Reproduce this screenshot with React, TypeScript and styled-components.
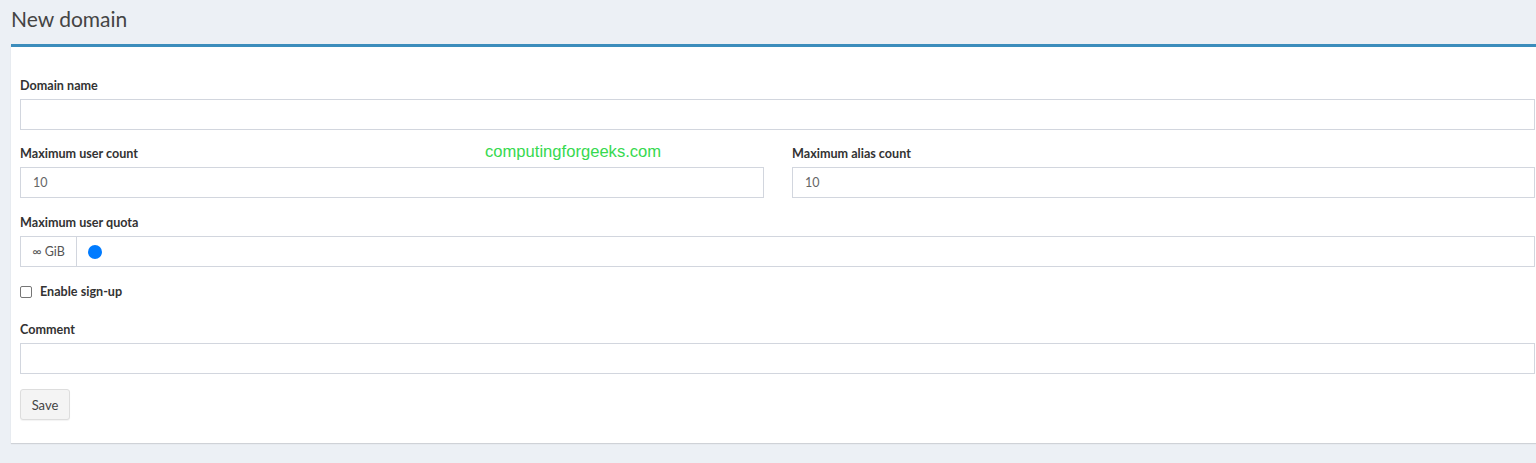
import React from "react";
import styled, { createGlobalStyle } from "styled-components";

const Global = createGlobalStyle`
  html, body { margin: 0; padding: 0; background: #ecf0f5; }
  body { font-family: "Source Sans Pro", Lato, "Noto Sans", sans-serif; color: #333; overflow: hidden; }
  * { box-sizing: border-box; }
`;

const Page = styled.div`
  position: relative;
  width: 1536px;
  height: 463px;
  padding-left: 11px;
`;

const Title = styled.h1`
  margin: 0;
  height: 44px;
  padding-top: 7px;
  font-size: 21px;
  line-height: 24px;
  font-weight: 400;
  color: #444;
`;

const Card = styled.div`
  background: #fff;
  border-top: 3px solid #3c8dbc;
  box-shadow: 0 1px 1px rgba(0, 0, 0, 0.12);
  padding: 30px 1px 23px 9px;
`;

const Group = styled.div<{ $gap?: number }>`
  margin-bottom: ${(p) => p.$gap ?? 15}px;
`;

const Row = styled.div`
  display: grid;
  grid-template-columns: 744px 1fr;
  column-gap: 28px;
`;

const Label = styled.label`
  display: block;
  font-size: 12.6px;
  font-weight: 700;
  line-height: 17px;
  margin-bottom: 5px;
  color: #333;
`;

const Input = styled.input`
  display: block;
  width: 100%;
  height: 31px;
  border: 1px solid #d2d6de;
  border-radius: 0;
  padding: 0 12px;
  font-family: inherit;
  font-size: 12.5px;
  color: #666;
  background: #fff;
  outline: none;
`;

const InputGroup = styled.div`
  display: flex;
  height: 31px;
  border: 1px solid #d2d6de;
`;

const Addon = styled.span`
  width: 56px;
  display: flex;
  align-items: center;
  justify-content: center;
  font-size: 12.5px;
  color: #555;
  border-right: 1px solid #d2d6de;
`;

const SliderArea = styled.div`
  flex: 1;
  display: flex;
  align-items: center;
  padding-left: 11px;
`;

const Thumb = styled.span`
  width: 14px;
  height: 14px;
  border-radius: 50%;
  background: #007bff;
`;

const CheckRow = styled.label`
  display: flex;
  align-items: center;
  height: 19px;
  margin-bottom: 20px;
  font-size: 12.6px;
  font-weight: 700;
  color: #333;
`;

const Box = styled.span`
  width: 12px;
  height: 12px;
  border: 1px solid #767676;
  border-radius: 2px;
  margin: 0 8px 0 0;
  background: #fff;
`;

const Button = styled.button`
  width: 50px;
  height: 31px;
  background: #f4f4f4;
  border: 1px solid #ddd;
  border-radius: 3px;
  font-family: inherit;
  font-size: 13px;
  color: #444;
  box-shadow: 0 1px 1px rgba(0,0,0,0.05);
`;

const Watermark = styled.div`
  position: absolute;
  left: 485px;
  top: 142px;
  font-family: "Liberation Sans", Arial, sans-serif;
  font-size: 16.6px;
  line-height: 20px;
  color: #36d94f;
`;

export default function App() {
  return (
    <Page>
      <Global />
      <Title>New domain</Title>
      <Card>
        <Group>
          <Label>Domain name</Label>
          <Input />
        </Group>
        <Row>
          <Group $gap={16}>
            <Label>Maximum user count</Label>
            <Input defaultValue="10" />
          </Group>
          <Group $gap={16}>
            <Label>Maximum alias count</Label>
            <Input defaultValue="10" />
          </Group>
        </Row>
        <Group>
          <Label>Maximum user quota</Label>
          <InputGroup>
            <Addon>∞ GiB</Addon>
            <SliderArea>
              <Thumb />
            </SliderArea>
          </InputGroup>
        </Group>
        <CheckRow>
          <Box />
          Enable sign-up
        </CheckRow>
        <Group>
          <Label>Comment</Label>
          <Input />
        </Group>
        <Button>Save</Button>
      </Card>
      <Watermark>computingforgeeks.com</Watermark>
    </Page>
  );
}
